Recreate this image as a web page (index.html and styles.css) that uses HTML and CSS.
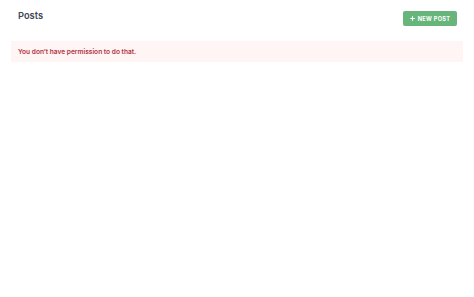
FILE: index.html
```html
<!DOCTYPE html>
<html>
<head>
<meta charset="utf-8">
<link rel="stylesheet" href="styles.css">
</head>
<body>
<div class="page">
  <header class="header">
    <h1 class="title">Posts</h1>
    <button class="btn-new"><svg class="plus" viewBox="0 0 10 10" width="5" height="5"><path d="M5 0.5v9M0.5 5h9" stroke="#fff" stroke-width="2.2"/></svg>NEW POST</button>
  </header>
  <div class="alert">You don’t have permission to do that.</div>
</div>
</body>
</html>
```
FILE: styles.css
```css
html, body { margin: 0; padding: 0; background: #fff; }
body { font-family: Inter, "Noto Sans", sans-serif; }
.page { padding: 11px 11px 0 11px; }
.header {
  display: flex;
  justify-content: space-between;
  align-items: flex-start;
  padding: 0 7px 0 7px;
  height: 15px;
}
.title {
  margin: 0;
  font-size: 9.3px;
  font-weight: 600;
  color: #404756;
  line-height: 10px;
}
.btn-new {
  display: flex;
  align-items: center;
  gap: 3px;
  height: 15px;
  width: 54px;
  justify-content: center;
  border: 0;
  border-radius: 2px;
  background: #67b57b;
  color: #fff;
  font-family: Inter, "Noto Sans", sans-serif;
  font-size: 5.6px;
  font-weight: 700;
  letter-spacing: 0.3px;
  padding: 0;
  margin-right: -1px;
}
.plus { display: block; }
.alert {
  margin-top: 15px;
  height: 21px;
  display: flex;
  align-items: center;
  padding: 0 7px;
  background: #fff5f5;
  color: #b3323f;
  font-size: 6.6px;
  font-weight: 600;
}
```
